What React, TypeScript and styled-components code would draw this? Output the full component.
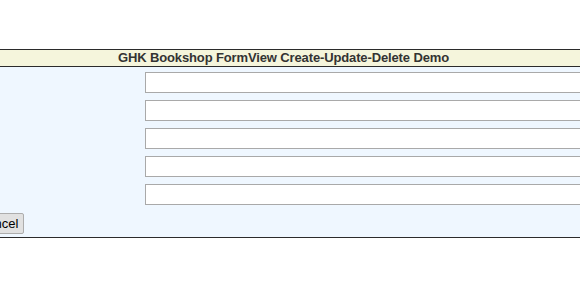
import React from "react";
import styled, { createGlobalStyle } from "styled-components";

const GlobalStyle = createGlobalStyle`
  html, body {
    margin: 0;
    padding: 0;
    background: #ffffff;
    overflow: hidden;
    font-family: "Liberation Sans", Arial, sans-serif;
  }
`;

const Page = styled.div`
  width: 580px;
  height: 304px;
  overflow: hidden;
  padding-top: 49px;
  box-sizing: border-box;
`;

const FormTable = styled.div`
  width: 629px;
  margin-left: -31px;
  border-top: 1px solid #2b2b2b;
  border-bottom: 1px solid #2b2b2b;
  background: #eff7ff;
`;

const Caption = styled.div`
  height: 16px;
  line-height: 16px;
  background: #f5f5dc;
  border-bottom: 1px solid #2b2b2b;
  text-align: center;
  font-size: 13px;
  font-weight: bold;
  letter-spacing: -0.13px;
  color: #333333;
`;

const Body = styled.div`
  padding: 5px 2px 3px;
  display: flex;
  flex-direction: column;
  gap: 7px;
`;

const Row = styled.div`
  display: grid;
  grid-template-columns: 174px 1fr;
  align-items: center;
`;

const Label = styled.span`
  font-size: 13px;
  color: #333333;
`;

const TextField = styled.input`
  box-sizing: border-box;
  width: 450px;
  height: 21px;
  margin: 0;
  padding: 1px 2px;
  border: 1px solid #a9a9a9;
  background: #ffffff;
  font-family: "Liberation Sans", Arial, sans-serif;
  font-size: 13px;
  outline: none;
`;

const Actions = styled.div`
  display: flex;
  gap: 4px;
  margin-top: 1px;
`;

const Button = styled.button`
  box-sizing: border-box;
  height: 21px;
  margin: 0;
  padding: 0 5px 0 6px;
  border: 1px solid #adadad;
  border-radius: 2px;
  background: #e1e1e1;
  font-family: "Liberation Sans", Arial, sans-serif;
  font-size: 13px;
  color: #000000;
  line-height: 19px;
`;

const fields = ["", "", "", "", ""];

export default function App() {
  return (
    <>
      <GlobalStyle />
      <Page>
        <FormTable>
          <Caption>GHK Bookshop FormView Create-Update-Delete Demo</Caption>
          <Body>
            {fields.map((label, i) => (
              <Row key={i}>
                <Label>{label}</Label>
                <TextField type="text" />
              </Row>
            ))}
            <Actions>
              <Button type="button">Cancel</Button>
            </Actions>
          </Body>
        </FormTable>
      </Page>
    </>
  );
}
